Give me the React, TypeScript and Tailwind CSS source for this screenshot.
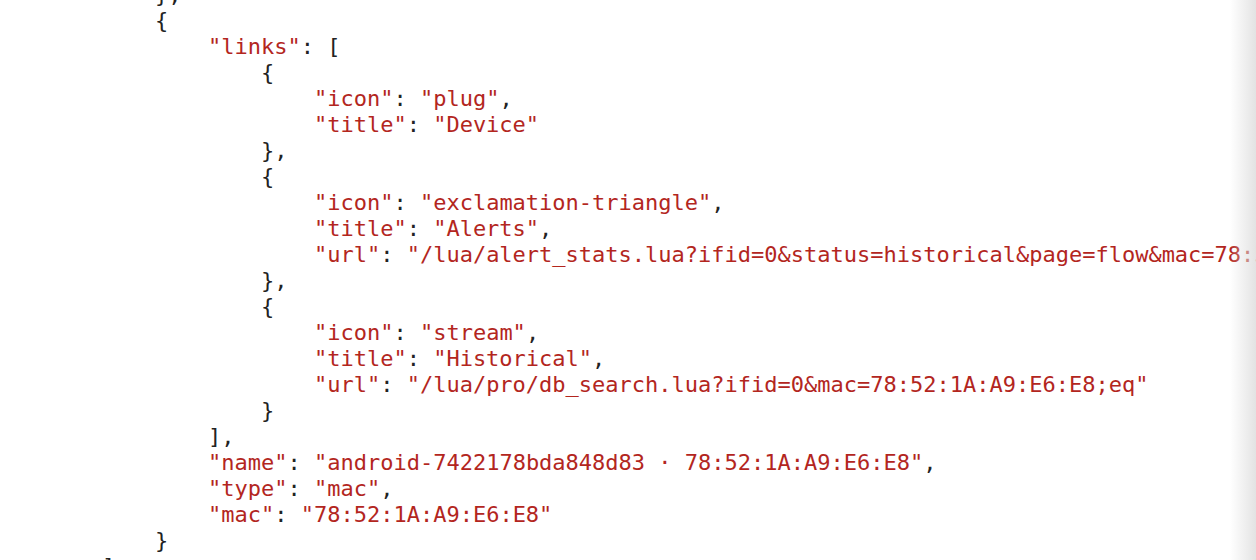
type Token = { t: string; s?: boolean };

const str = (t: string): Token => ({ t, s: true });
const p = (t: string): Token => ({ t });

const lines: { level: number; tokens: Token[] }[] = [
  { level: 0, tokens: [p("},")] },
  { level: 0, tokens: [p("{")] },
  { level: 1, tokens: [str('"links"'), p(": [")] },
  { level: 2, tokens: [p("{")] },
  { level: 3, tokens: [str('"icon"'), p(": "), str('"plug"'), p(",")] },
  { level: 3, tokens: [str('"title"'), p(": "), str('"Device"')] },
  { level: 2, tokens: [p("},")] },
  { level: 2, tokens: [p("{")] },
  { level: 3, tokens: [str('"icon"'), p(": "), str('"exclamation-triangle"'), p(",")] },
  { level: 3, tokens: [str('"title"'), p(": "), str('"Alerts"'), p(",")] },
  {
    level: 3,
    tokens: [
      str('"url"'),
      p(": "),
      str('"/lua/alert_stats.lua?ifid=0&status=historical&page=flow&mac=78:52:1A:A9:E6:E8;eq"'),
    ],
  },
  { level: 2, tokens: [p("},")] },
  { level: 2, tokens: [p("{")] },
  { level: 3, tokens: [str('"icon"'), p(": "), str('"stream"'), p(",")] },
  { level: 3, tokens: [str('"title"'), p(": "), str('"Historical"'), p(",")] },
  {
    level: 3,
    tokens: [str('"url"'), p(": "), str('"/lua/pro/db_search.lua?ifid=0&mac=78:52:1A:A9:E6:E8;eq"')],
  },
  { level: 2, tokens: [p("}")] },
  { level: 1, tokens: [p("],")] },
  { level: 1, tokens: [str('"name"'), p(": "), str('"android-7422178bda848d83 · 78:52:1A:A9:E6:E8"'), p(",")] },
  { level: 1, tokens: [str('"type"'), p(": "), str('"mac"'), p(",")] },
  { level: 1, tokens: [str('"mac"'), p(": "), str('"78:52:1A:A9:E6:E8"')] },
  { level: 0, tokens: [p("}")] },
  { level: -1, tokens: [p("]")] },
];

const App = () => {
  return (
    <div className="relative h-[560px] w-[1256px] overflow-hidden bg-white">
      <div className="-mt-[18px] pl-[102px] font-['DejaVu_Sans_Mono',monospace] text-[22px] leading-[26px] text-[#222]">
        {lines.map((line, i) => (
          <div key={i} className="h-[26px] whitespace-pre">
            {"    ".repeat(line.level + 1)}
            {line.tokens.map((tok, j) => (
              <span key={j} className={tok.s ? "text-[#b3261e]" : ""}>
                {tok.t}
              </span>
            ))}
          </div>
        ))}
      </div>
      {/* scroll edge shade */}
      <div className="pointer-events-none absolute right-0 top-0 h-full w-[26px] bg-gradient-to-r from-white/0 to-[#dcdcdc]/80" />
    </div>
  );
};

export default App;
